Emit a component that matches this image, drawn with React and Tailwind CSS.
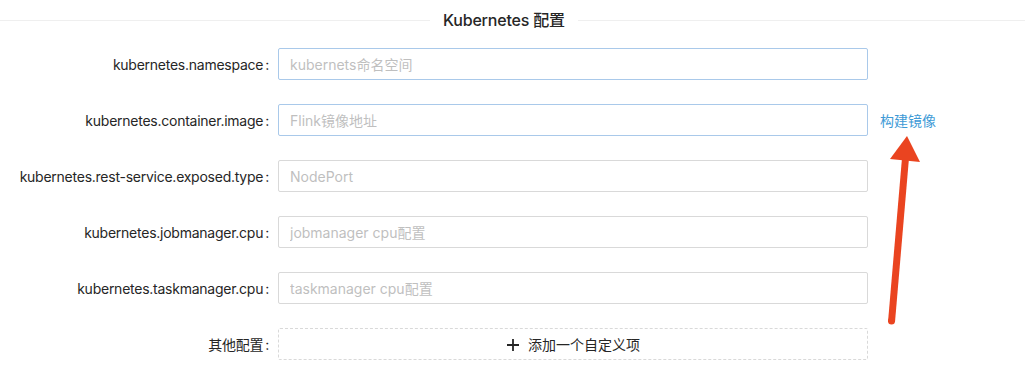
import React from 'react';

const fields = [
  { label: 'kubernetes.namespace', placeholder: 'kubernets命名空间', focus: true },
  { label: 'kubernetes.container.image', placeholder: 'Flink镜像地址', focus: true, action: '构建镜像' },
  { label: 'kubernetes.rest-service.exposed.type', placeholder: 'NodePort' },
  { label: 'kubernetes.jobmanager.cpu', placeholder: 'jobmanager cpu配置' },
  { label: 'kubernetes.taskmanager.cpu', placeholder: 'taskmanager cpu配置' },
];

function Label({ children }) {
  return (
    <div className="flex w-[278px] shrink-0 items-center justify-end pr-[9px] text-[14px] tracking-[-0.25px] text-[#262626]">
      <span>{children}</span>
      <span className="ml-[2px]">:</span>
    </div>
  );
}

export default function App() {
  return (
    <div
      className="relative h-[386px] w-full overflow-hidden bg-white"
      style={{ fontFamily: 'Inter, "Noto Sans CJK SC", sans-serif' }}
    >
      <div className="flex h-10 items-center">
        <div className="h-px w-[430px] bg-[#efefef]" />
        <div className="px-[13px] text-[16px] font-medium tracking-[-0.2px] text-[#262626]">Kubernetes 配置</div>
        <div className="h-px flex-1 bg-[#efefef]" />
      </div>

      <div className="flex flex-col gap-6 pt-2">
        {fields.map((f) => (
          <div key={f.label} className="flex h-8 items-center">
            <Label>{f.label}</Label>
            <input
              placeholder={f.placeholder}
              className={`h-8 w-[590px] rounded-[2px] border bg-white px-[11px] text-[14px] outline-none placeholder:text-[#bfbfbf] ${
                f.focus ? 'border-[#a9c9ea]' : 'border-[#d9d9d9]'
              }`}
            />
            {f.action && (
              <button className="ml-3 text-[14px] text-[#3d9ad6]">{f.action}</button>
            )}
          </div>
        ))}

        <div className="flex h-8 items-center">
          <Label>其他配置</Label>
          <button className="flex h-8 w-[590px] items-center justify-center gap-2 rounded-[2px] border border-dashed border-[#d9d9d9] bg-white text-[14px] text-[#262626]">
            <svg width="14" height="14" viewBox="0 0 14 14" className="mt-px">
              <path d="M7 1v12M1 7h12" stroke="#262626" strokeWidth="1.8" />
            </svg>
            <span>添加一个自定义项</span>
          </button>
        </div>
      </div>

      <svg className="pointer-events-none absolute left-0 top-0" width="1025" height="386">
        <path d="M888 322 L902 158 L909 158 L895 322 Z" fill="#ea4420" strokeLinejoin="round" />
        <circle cx="891.5" cy="321" r="3.5" fill="#ea4420" />
        <path d="M907 136 L920 162 L890 159 Z" fill="#ea4420" />
      </svg>
    </div>
  );
}
